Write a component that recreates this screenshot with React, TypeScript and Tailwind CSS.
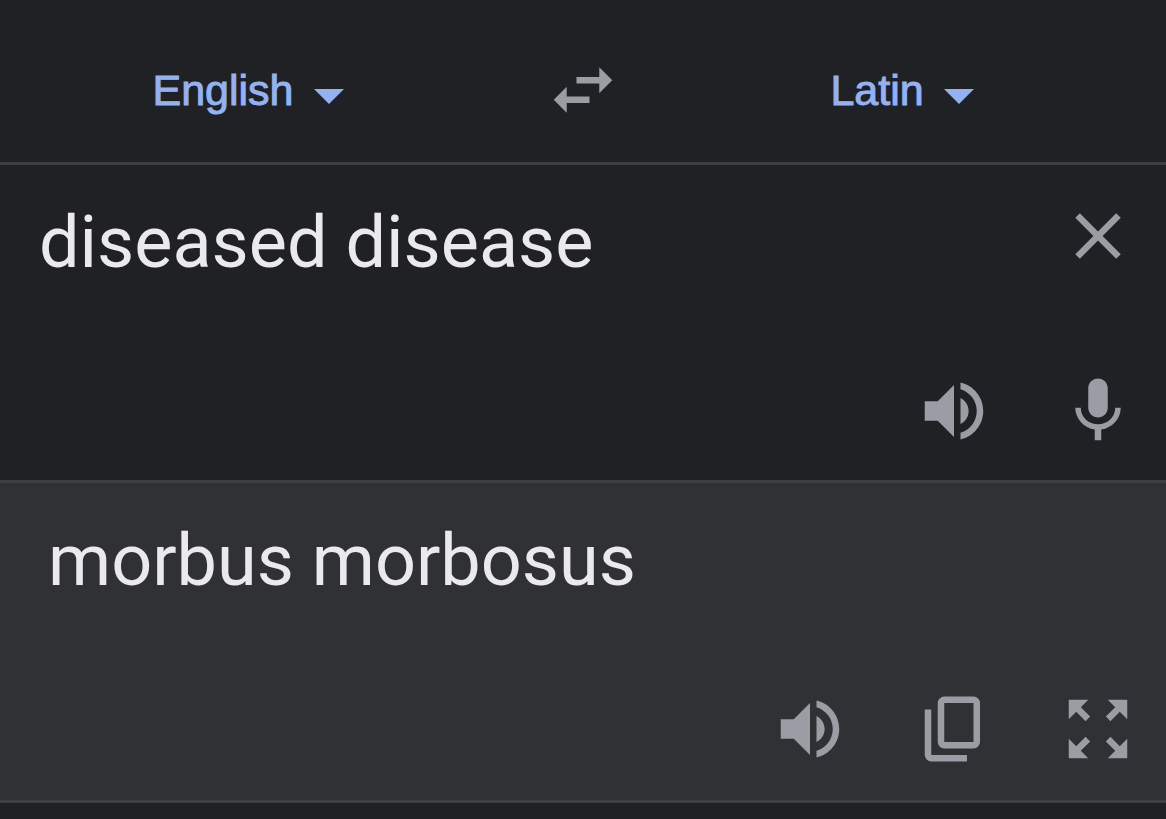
import { useState } from 'react'
import type { ReactNode } from 'react'

const ICONS = {
  swap: 'M6.99 11L3 15l3.99 4v-3H14v-2H6.99v-3zM21 9l-3.99-4v3H10v2h7.01v3L21 9z',
  close:
    'M19 6.41L17.59 5 12 10.59 6.41 5 5 6.41 10.59 12 5 17.59 6.41 19 12 13.41 17.59 19 19 17.59 13.41 12z',
  volume:
    'M3 9v6h4l5 5V4L7 9H3zm13.5 3c0-1.77-1.02-3.29-2.5-4.03v8.05c1.48-.73 2.5-2.25 2.5-4.02zM14 3.23v2.06c2.89.86 5 3.54 5 6.71s-2.11 5.85-5 6.71v2.06c4.01-.91 7-4.49 7-8.77s-2.99-7.86-7-8.77z',
  mic: 'M12 14c1.66 0 3-1.34 3-3V5c0-1.66-1.34-3-3-3S9 3.34 9 5v6c0 1.66 1.34 3 3 3zm5.3-3c0 3-2.54 5.1-5.3 5.1S6.7 14 6.7 11H5c0 3.41 2.72 6.23 6 6.72V21h2v-3.28c3.28-.48 6-3.3 6-6.72h-1.7z',
  copy: 'M9 2h9a2 2 0 0 1 2 2v12a2 2 0 0 1-2 2H9a2 2 0 0 1-2-2V4a2 2 0 0 1 2-2zm0 2v12h9V4H9zM3 6h2v14h11v2H5a2 2 0 0 1-2-2V6z',
  expand:
    'M15 3l2.3 2.3-2.89 2.87 1.42 1.42L18.7 6.7 21 9V3h-6zM3 9l2.3-2.3 2.87 2.89 1.42-1.42L6.7 5.3 9 3H3v6zm6 12l-2.3-2.3 2.89-2.87-1.42-1.42L5.3 17.3 3 15v6h6zm12-6l-2.3 2.3-2.87-2.89-1.42 1.42 2.89 2.87L15 21h6v-6z',
}

const LANGUAGES = ['English', 'Latin']

interface IconButtonProps {
  icon: keyof typeof ICONS
  label: string
  onClick?: () => void
}

function IconButton({ icon, label, onClick }: IconButtonProps) {
  return (
    <button type="button" aria-label={label} onClick={onClick} className="shrink-0 text-[#9b9ca4]">
      <svg viewBox="0 0 24 24" fill="currentColor" fillRule="evenodd" className="size-[78px]">
        <path d={ICONS[icon]} />
      </svg>
    </button>
  )
}

interface LanguageSelectProps {
  label: string
  value: string
  onChange: (value: string) => void
}

function LanguageSelect({ label, value, onChange }: LanguageSelectProps) {
  return (
    <label className="flex items-center gap-5 text-[#94b2f2]">
      <select
        aria-label={label}
        value={value}
        onChange={(e) => onChange(e.target.value)}
        className="appearance-none field-sizing-content bg-transparent font-['Liberation_Sans',sans-serif] text-[43px] leading-[54px] outline-none [-webkit-text-stroke:1px]"
      >
        {LANGUAGES.map((lang) => (
          <option key={lang}>{lang}</option>
        ))}
      </select>
      <svg viewBox="0 0 30 15" fill="currentColor" className="mt-3 w-[30px]">
        <path d="M0 0h30L15 15z" />
      </svg>
    </label>
  )
}

function Actions({ children }: { children: ReactNode }) {
  return <div className="mt-[83px] flex justify-end gap-[66px]">{children}</div>
}

export default function App() {
  const [from, setFrom] = useState('English')
  const [to, setTo] = useState('Latin')
  const [text, setText] = useState('diseased disease')

  const swap = () => {
    setFrom(to)
    setTo(from)
  }

  return (
    <main className="min-h-screen bg-[#202124] font-['Roboto',sans-serif] text-[#e9e9ee]">
      <header className="grid grid-cols-[1fr_auto_1fr] items-center border-b-3 border-[#3e3f43] pt-[51px] pb-[33px]">
        <div className="flex justify-center pr-12">
          <LanguageSelect label="Source language" value={from} onChange={setFrom} />
        </div>
        <IconButton icon="swap" label="Swap languages" onClick={swap} />
        <div className="flex justify-center pl-4">
          <LanguageSelect label="Target language" value={to} onChange={setTo} />
        </div>
      </header>

      <section className="border-b-3 border-[#3e3f43] pt-8 pr-[29px] pb-[30px] pl-[39px]">
        <div className="flex items-start">
          <textarea
            aria-label="Source text"
            rows={1}
            value={text}
            onChange={(e) => setText(e.target.value)}
            className="block min-w-0 flex-1 resize-none overflow-hidden bg-transparent text-7xl leading-[92px] outline-none"
          />
          <IconButton icon="close" label="Clear text" onClick={() => setText('')} />
        </div>
        <Actions>
          <IconButton icon="volume" label="Listen to source text" />
          <IconButton icon="mic" label="Translate by voice" />
        </Actions>
      </section>

      <section className="border-b-3 border-[#3e3f43] bg-[#303134] pt-8 pr-[29px] pb-8 pl-12">
        <p className="text-7xl leading-[92px]">morbus morbosus</p>
        <Actions>
          <IconButton icon="volume" label="Listen to translation" />
          <IconButton icon="copy" label="Copy translation" />
          <IconButton icon="expand" label="Full screen" />
        </Actions>
      </section>
    </main>
  )
}
